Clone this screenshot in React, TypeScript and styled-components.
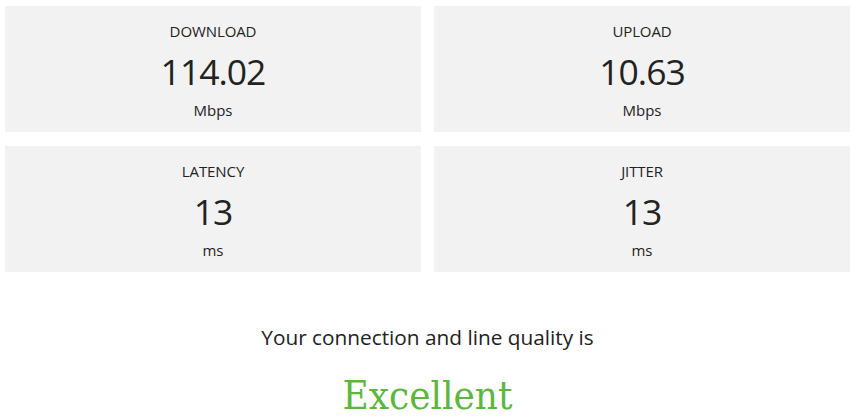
import React from "react";
import styled, { createGlobalStyle } from "styled-components";

const GlobalStyle = createGlobalStyle`
  html, body {
    margin: 0;
    padding: 0;
    background: #ffffff;
  }
  body {
    font-family: "Open Sans", "Noto Sans", sans-serif;
    color: #222222;
  }
`;

const Page = styled.div`
  padding: 6px 6px 0 5px;
`;

const Grid = styled.div`
  display: grid;
  grid-template-columns: 1fr 1fr;
  column-gap: 13px;
  row-gap: 14px;
`;

const Card = styled.div`
  background: #f2f2f2;
  height: 126px;
  box-sizing: border-box;
  padding-top: 15px;
  display: flex;
  flex-direction: column;
  align-items: center;
`;

const Label = styled.div`
  font-size: 15px;
  line-height: 20px;
  letter-spacing: -0.1px;
`;

const Value = styled.div`
  font-size: 35.5px;
  line-height: 44px;
  margin-top: 8px;
  letter-spacing: -1px;
`;

const Unit = styled.div`
  font-size: 15px;
  line-height: 20px;
  margin-top: 7px;
`;

const Summary = styled.div`
  display: flex;
  flex-direction: column;
  align-items: center;
  padding-top: 51px;
`;

const SummaryText = styled.div`
  font-size: 20.8px;
  line-height: 28px;
`;

const Rating = styled.div<{ $color: string }>`
  font-family: "DejaVu Serif", "Liberation Serif", serif;
  font-stretch: condensed;
  font-size: 40px;
  line-height: 48px;
  margin-top: 20px;
  color: ${(p) => p.$color};
`;

const stats = [
  { label: "DOWNLOAD", value: "114.02", unit: "Mbps" },
  { label: "UPLOAD", value: "10.63", unit: "Mbps" },
  { label: "LATENCY", value: "13", unit: "ms" },
  { label: "JITTER", value: "13", unit: "ms" },
];

const App = () => (
  <>
    <GlobalStyle />
    <Page>
      <Grid>
        {stats.map((s) => (
          <Card key={s.label}>
            <Label>{s.label}</Label>
            <Value>{s.value}</Value>
            <Unit>{s.unit}</Unit>
          </Card>
        ))}
      </Grid>
      <Summary>
        <SummaryText>Your connection and line quality is</SummaryText>
        <Rating $color="#5cb83c">Excellent</Rating>
      </Summary>
    </Page>
  </>
);

export default App;
